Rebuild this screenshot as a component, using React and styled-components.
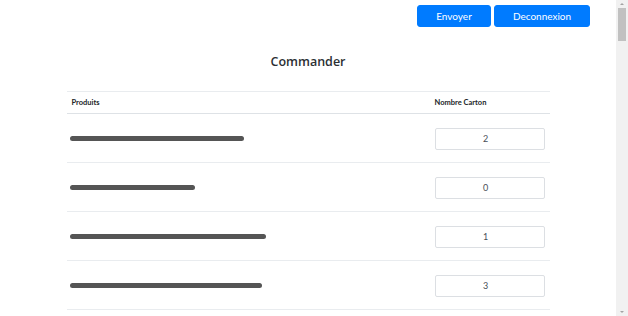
import React from "react";
import styled, { createGlobalStyle } from "styled-components";

const GlobalStyle = createGlobalStyle`
  html, body, #root {
    margin: 0;
    padding: 0;
    height: 100%;
    overflow: hidden;
    background: #fff;
    font-family: Lato, "Open Sans", sans-serif;
    color: #212529;
  }
`;

const Frame = styled.div`
  display: flex;
  height: 100%;
`;

const Page = styled.div`
  flex: 1;
  overflow: hidden;
`;

const ScrollRail = styled.div`
  width: 12px;
  background: #f1f1f1;
  display: flex;
  flex-direction: column;
  align-items: center;
`;

const Arrow = styled.div`
  height: 8px;
  display: flex;
  align-items: center;
  justify-content: center;
  &::before {
    content: "";
    border-left: 2px solid transparent;
    border-right: 2px solid transparent;
    ${(props) =>
      props.down
        ? "border-top: 2px solid #a3a3a3;"
        : "border-bottom: 2px solid #a3a3a3;"}
  }
`;

const Thumb = styled.div`
  width: 8px;
  height: 33px;
  background: #c1c1c1;
`;

const Track = styled.div`
  flex: 1;
`;

const TopBar = styled.div`
  display: flex;
  justify-content: flex-end;
  gap: 3px;
  padding: 5px 26px 0 0;
`;

const Button = styled.button`
  height: 22px;
  width: ${(props) => props.w}px;
  background: #007bff;
  color: #fff;
  border: 1px solid #007bff;
  border-radius: 3px;
  font-family: inherit;
  font-size: 10px;
  padding: 0;
  cursor: pointer;
`;

const Title = styled.h2`
  margin: 25px 0 19px;
  text-align: center;
  font-family: "Open Sans", sans-serif;
  font-size: 12.5px;
  font-weight: 600;
  line-height: 20px;
  color: #2b2f33;
`;

const Table = styled.table`
  width: 483px;
  margin: 0 auto;
  border-collapse: collapse;
`;

const HeadCell = styled.th`
  text-align: left;
  font-size: 7.5px;
  font-weight: 700;
  height: 21px;
  padding: 0 5px;
  border-top: 1px solid #e9ecef;
  border-bottom: 1px solid #dee2e6;
  width: ${(props) => (props.narrow ? "110px" : "auto")};
  padding-left: ${(props) => (props.narrow ? "3px" : "5px")};
`;

const Cell = styled.td`
  height: 48px;
  padding: 0 5px 0 3px;
  border-bottom: 1px solid #e9ecef;
  vertical-align: middle;
`;

const Redacted = styled.div`
  height: 5px;
  width: ${(props) => props.w}px;
  background: #555;
  border-radius: 3px;
  filter: blur(0.5px);
`;

const Qty = styled.input`
  box-sizing: border-box;
  width: 110px;
  height: 22px;
  padding: 0 8px 0 0;
  border: 1px solid #dcdfe3;
  border-radius: 2px;
  text-align: center;
  font-family: inherit;
  font-size: 9px;
  color: #495057;
  outline: none;
`;

const widths = [174, 125, 196, 192, 160, 182, 140, 205, 170, 150];
const qtys = [2, 0, 1, 3, 0, 0, 1, 2, 0, 4];

const rows = Array.from({ length: 12 }, (_, i) => ({
  w: widths[i % widths.length],
  q: qtys[i % qtys.length],
}));

export default function App() {
  return (
    <>
      <GlobalStyle />
      <Frame>
        <Page>
          <TopBar>
            <Button w={74}>Envoyer</Button>
            <Button w={96}>Deconnexion</Button>
          </TopBar>
          <Title>Commander</Title>
          <Table>
            <thead>
              <tr>
                <HeadCell>Produits</HeadCell>
                <HeadCell narrow>Nombre Carton</HeadCell>
              </tr>
            </thead>
            <tbody>
              {rows.map((r, i) => (
                <tr key={i}>
                  <Cell>
                    <Redacted w={r.w} />
                  </Cell>
                  <Cell>
                    <Qty defaultValue={r.q} />
                  </Cell>
                </tr>
              ))}
            </tbody>
          </Table>
        </Page>
        <ScrollRail>
          <Arrow />
          <Thumb />
          <Track />
          <Arrow down />
        </ScrollRail>
      </Frame>
    </>
  );
}
